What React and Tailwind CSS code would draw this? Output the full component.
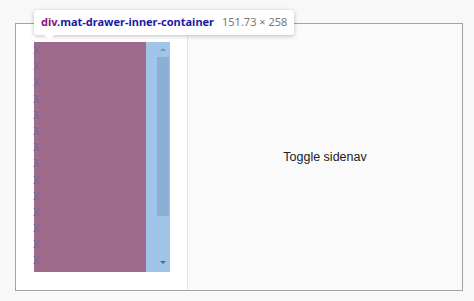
import React from 'react';

const marks = Array.from({ length: 14 });

function Scrollbar() {
    return (
        <div className="w-[24px] bg-[#a0c5e9] flex justify-end pr-[1px]">
            <div className="w-[12px] flex flex-col">
                <div className="h-[15px] flex items-center justify-center">
                    <div className="w-0 h-0 border-l-[3px] border-r-[3px] border-b-[3px] border-l-transparent border-r-transparent border-b-[#7d95b8]"></div>
                </div>
                <div className="h-[159px] bg-[#8cafd5]"></div>
                <div className="flex-1 flex items-end justify-center pb-[8px]">
                    <div className="w-0 h-0 border-l-[3px] border-r-[3px] border-t-[3px] border-l-transparent border-r-transparent border-t-[#56688e]"></div>
                </div>
            </div>
        </div>
    );
}

export default function App() {
    return (
        <div className="relative w-[474px] h-[301px] bg-[#f8f8f8] overflow-hidden" style={{ fontFamily: '"Liberation Sans", Arial, sans-serif' }}>
            <div className="pt-[23px] pl-[15px]">
                <div className="w-[448px] h-[268px] border border-[#a3a3a3] flex">
                    <div className="w-[172px] bg-white border-r border-[#e4e4e4] pt-[18px] pl-[18px]">
                        <div className="flex h-[230px]">
                            <div className="w-[112px] bg-[#9e6b8c] flex flex-col pt-[1px]">
                                {marks.map((_, i) => (
                                    <div key={i} className="h-[16.2px] leading-[16px] text-[10px] text-[#6b6ca6] -ml-[1px]">X</div>
                                ))}
                            </div>
                            <Scrollbar />
                        </div>
                    </div>
                    <div className="flex-1 bg-[#fafafa] flex items-center justify-center">
                        <span className="text-[12.5px] text-[#222]">Toggle sidenav</span>
                    </div>
                </div>
            </div>

            <div className="absolute left-[34px] top-[10px] h-[25px] px-[7px] bg-white rounded-[3px] shadow-[0_1px_4px_rgba(0,0,0,0.25)] flex items-center gap-[8px] text-[11px] whitespace-nowrap" style={{ fontFamily: '"Noto Sans", "Open Sans", sans-serif' }}>
                <span className="font-bold">
                    <span className="text-[#881280]">div</span>
                    <span className="text-[#1a1aa6]">.mat-drawer-inner-container</span>
                </span>
                <span className="text-[#777]">151.73 × 258</span>
                <div className="absolute left-[9px] top-[24px] w-0 h-0 border-l-[6px] border-r-[6px] border-t-[6px] border-l-transparent border-r-transparent border-t-white"></div>
            </div>
        </div>
    );
}
